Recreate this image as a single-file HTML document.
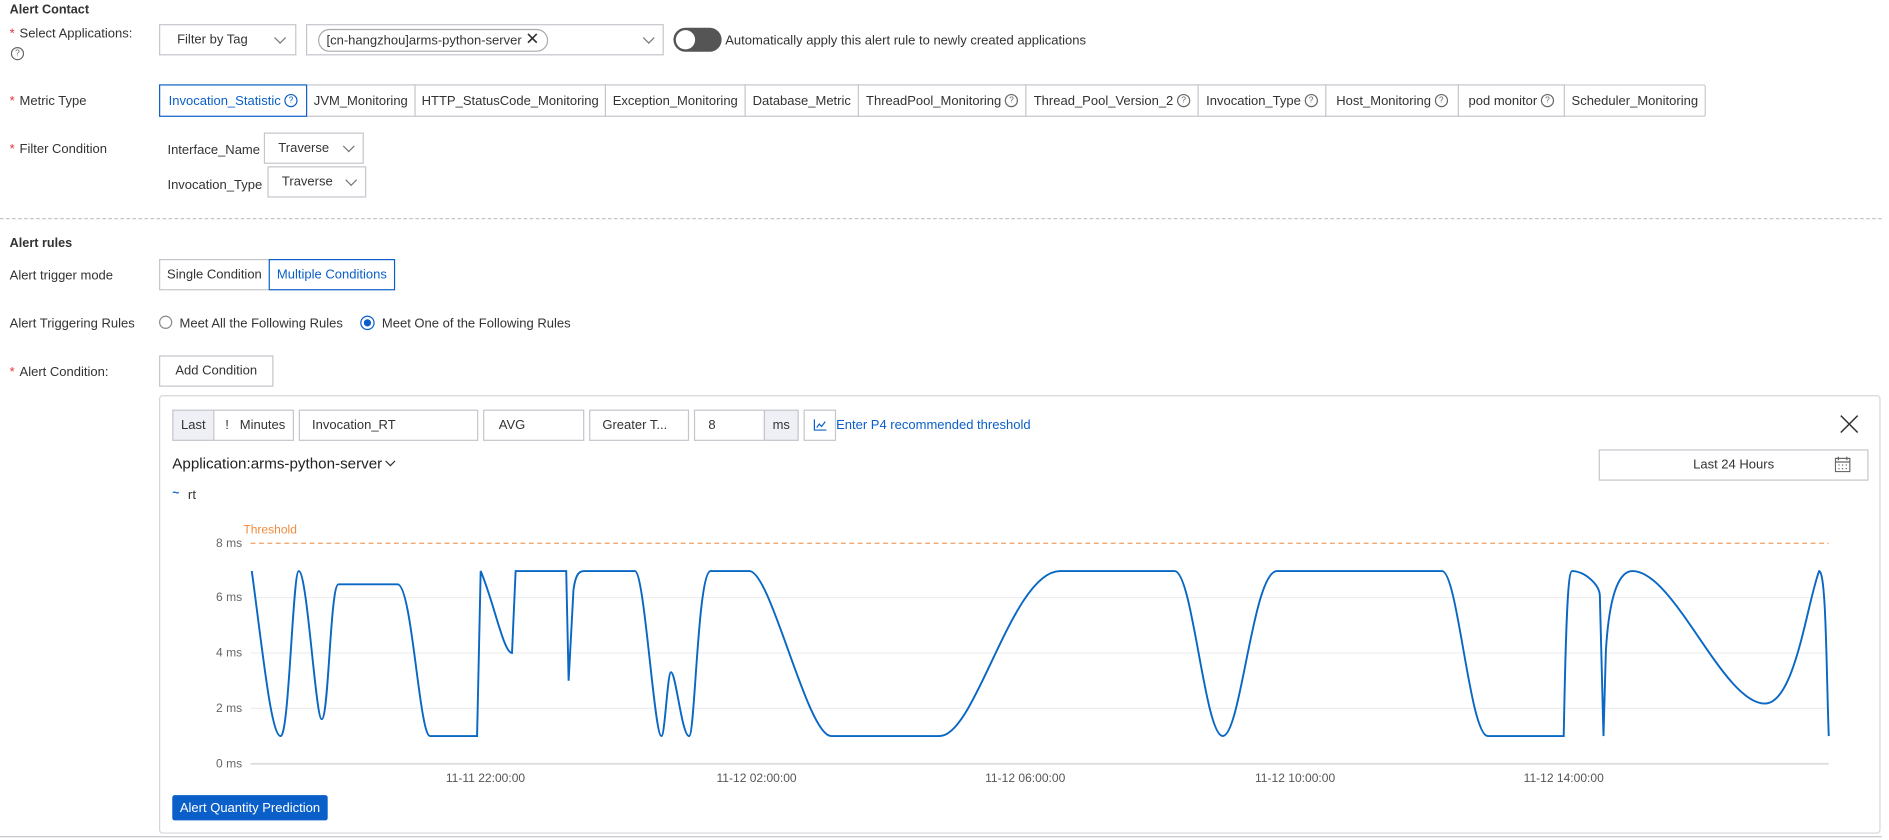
<!DOCTYPE html>
<html><head><meta charset="utf-8"><style>
html,body{margin:0;padding:0;background:#fff;overflow:hidden;width:1889px;height:839px}
#w{position:absolute;left:0;top:0;width:1568px;height:697px;transform:scale(1.20472);transform-origin:0 0;font-family:"Liberation Sans",sans-serif;font-size:10.8px;color:#333}
.a{position:absolute;white-space:nowrap}
.b{position:absolute;box-sizing:border-box;border:1px solid #c4c6cc;background:#fff;display:flex;align-items:center;white-space:nowrap;color:#333}
.r{color:#e5343a;margin-right:4px}
.q{display:inline-block;width:9px;height:9px;border:1px solid #666;border-radius:50%;font-size:7px;line-height:9px;text-align:center;color:#666;margin-left:3px;vertical-align:middle}
.chev{position:absolute;width:6px;height:6px;border-right:1px solid #777;border-bottom:1px solid #777;transform:rotate(45deg)}
.seg{position:absolute;top:70px;height:27px;box-sizing:border-box;border:1px solid #c4c6cc;border-left:none;display:flex;align-items:center;justify-content:center;color:#333}
.t{font-weight:bold;color:#333;font-size:10.5px}
.ax{position:absolute;font-size:10px;color:#666;text-align:right;width:40px}
.xl{position:absolute;font-size:10px;color:#555;top:641px;width:100px;text-align:center}
.l{margin-top:1px}
</style></head><body><div id="w">
<div class="a t" style="left:8px;top:2px">Alert Contact</div>
<div class="a" style="left:8px;top:22px"><span class="r">*</span>Select Applications:</div>
<div class="a" style="left:9px;top:38px"><span class="q" style="margin:0">?</span></div>
<div class="b" style="left:132px;top:20px;width:114px;height:26px;padding-left:14px">Filter by Tag<span class="chev" style="left:96px;top:7px"></span></div>
<div class="b" style="left:254px;top:20px;width:297px;height:26px;padding-left:9px"><span style="border:1px solid #aaa;border-radius:10px;padding:2px 6px;color:#333">[cn-hangzhou]arms-python-server <span style="font-size:14px;line-height:10px">✕</span></span><span class="chev" style="left:280px;top:7px"></span></div>
<div class="a" style="left:559px;top:23px;width:40px;height:20px;border-radius:10px;background:#555"></div>
<div class="a" style="left:561px;top:25px;width:16px;height:16px;border-radius:50%;background:#fff"></div>
<div class="a" style="left:602px;top:28px">Automatically apply this alert rule to newly created applications</div>

<div class="a" style="left:8px;top:78px"><span class="r">*</span>Metric Type</div>
<div class="seg" style="left:132px;width:123px;border:1px solid #0a5fc8;color:#0a5fc8">Invocation_Statistic<span class="q" style="border-color:#0a5fc8;color:#0a5fc8">?</span></div>
<div class="seg" style="left:255px;width:90px">JVM_Monitoring</div>
<div class="seg" style="left:345px;width:158px">HTTP_StatusCode_Monitoring</div>
<div class="seg" style="left:503px;width:116px">Exception_Monitoring</div>
<div class="seg" style="left:619px;width:94px">Database_Metric</div>
<div class="seg" style="left:713px;width:139px">ThreadPool_Monitoring<span class="q">?</span></div>
<div class="seg" style="left:852px;width:143px">Thread_Pool_Version_2<span class="q">?</span></div>
<div class="seg" style="left:995px;width:106px">Invocation_Type<span class="q">?</span></div>
<div class="seg" style="left:1101px;width:110px">Host_Monitoring<span class="q">?</span></div>
<div class="seg" style="left:1211px;width:88px">pod monitor<span class="q">?</span></div>
<div class="seg" style="left:1299px;width:117px;border-radius:0 2px 2px 0">Scheduler_Monitoring</div>

<div class="a" style="left:8px;top:118px"><span class="r">*</span>Filter Condition</div>
<div class="a" style="left:139px;top:119px">Interface_Name</div>
<div class="b" style="left:219px;top:110px;width:83px;height:26px;padding-left:11px">Traverse<span class="chev" style="left:66px;top:7px"></span></div>
<div class="a" style="left:139px;top:148px">Invocation_Type</div>
<div class="b" style="left:222px;top:138px;width:82px;height:26px;padding-left:11px">Traverse<span class="chev" style="left:65px;top:7px"></span></div>

<div class="a" style="left:0;top:181px;width:1562px;border-top:1px dashed #c4c6cc"></div>
<div class="a t" style="left:8px;top:196px">Alert rules</div>
<div class="a" style="left:8px;top:223px">Alert trigger mode</div>
<div class="b" style="left:132px;top:215px;width:92px;height:26px;justify-content:center">Single Condition</div>
<div class="b" style="left:223px;top:215px;width:105px;height:26px;justify-content:center;border-color:#0a5fc8;color:#0a5fc8">Multiple Conditions</div>
<div class="a" style="left:8px;top:263px">Alert Triggering Rules</div>
<div class="a" style="left:132px;top:262px;width:11px;height:11px;border:1px solid #888;border-radius:50%;box-sizing:border-box"></div>
<div class="a" style="left:149px;top:263px">Meet All the Following Rules</div>
<div class="a" style="left:299px;top:262px;width:12px;height:12px;border:1px solid #0a5fc8;border-radius:50%;box-sizing:border-box"></div>
<div class="a" style="left:302px;top:265px;width:6px;height:6px;background:#0a5fc8;border-radius:50%"></div>
<div class="a" style="left:317px;top:263px">Meet One of the Following Rules</div>
<div class="a" style="left:8px;top:303px"><span class="r">*</span>Alert Condition:</div>
<div class="b" style="left:132px;top:295px;width:95px;height:26px;justify-content:center">Add Condition</div>

<div class="a" style="left:132px;top:328px;width:1429px;height:364px;border:1px solid #d4d6da;border-radius:3px;box-sizing:border-box"></div>
<div class="b" style="left:143px;top:340px;width:35px;height:26px;justify-content:center;background:#eef0f5">Last</div>
<div class="b" style="left:177px;top:340px;width:67px;height:26px;padding-left:9px">!&nbsp;&nbsp;&nbsp;Minutes</div>
<div class="b" style="left:248px;top:340px;width:149px;height:26px;padding-left:10px">Invocation_RT</div>
<div class="b" style="left:401px;top:340px;width:84px;height:26px;padding-left:12px">AVG</div>
<div class="b" style="left:489px;top:340px;width:83px;height:26px;padding-left:10px">Greater T...</div>
<div class="b" style="left:576px;top:340px;width:59px;height:26px;padding-left:11px">8</div>
<div class="b" style="left:634px;top:340px;width:29px;height:26px;justify-content:center;background:#eef0f5">ms</div>
<div class="b" style="left:667px;top:340px;width:27px;height:26px;justify-content:center"><svg width="11" height="10"><path d="M1 0V9H11M3 7L5 4 7 6 10 2" fill="none" stroke="#0a5fc8" stroke-width="1"/></svg></div>
<div class="a" style="left:694px;top:347px;color:#0a5fc8">Enter P4 recommended threshold</div>
<svg class="a" style="left:1527px;top:344px" width="16" height="16"><path d="M1 1L15 15M15 1L1 15" stroke="#333" stroke-width="1.3"/></svg>
<div class="a" style="left:143px;top:378px;font-size:12.6px;color:#222">Application:arms-python-server <span style="display:inline-block;width:5px;height:5px;border-right:1px solid #333;border-bottom:1px solid #333;transform:rotate(45deg);position:relative;top:-3px"></span></div>
<div class="b" style="left:1327px;top:373px;width:224px;height:26px;justify-content:center">Last 24 Hours</div>
<svg class="a" style="left:1523px;top:379px" width="13" height="13"><rect x="0.5" y="1.5" width="12" height="11" fill="none" stroke="#666"/><path d="M0.5 4.5H12.5M3 0V3M10 0V3" stroke="#666"/><path d="M3 7h1M6 7h1M9 7h1M3 10h1M6 10h1M9 10h1" stroke="#666"/></svg>
<div class="a" style="left:143px;top:404px;color:#0a5fc8;font-size:10px;font-weight:bold">~</div>
<div class="a" style="left:156px;top:405px;font-size:11px">rt</div>

<div class="a" style="left:202px;top:435px;font-size:10px;color:#f08a3c">Threshold</div>
<div class="ax" style="left:161px;top:446px">8 ms</div>
<div class="ax" style="left:161px;top:491px">6 ms</div>
<div class="ax" style="left:161px;top:537px">4 ms</div>
<div class="ax" style="left:161px;top:583px">2 ms</div>
<div class="ax" style="left:161px;top:629px">0 ms</div>
<svg class="a" style="left:0;top:0" width="1568" height="697">
<path d="M208 496H1518M208 542H1518M208 588H1518" stroke="#eeeeee" stroke-width="1"/>
<path d="M208 634H1518" stroke="#ddd" stroke-width="1.5"/>
<path d="M208 451H1518" stroke="#f3a870" stroke-width="1.2" stroke-dasharray="4,3"/>
<path d="M209 474C218 540 225 611 233 611C240 611 243 474 248 474C255 474 262 597 267 597C273 597 274 485 281 485H330C342 485 348 611 357 611H396L399 474C410 500 418 542 425 542L428 474H470L472 565L476 490C478 474 482 474 486 474H527C535 474 543 611 549 611C552 611 554 558 557 558C561 558 566 611 572 611C577 611 579 474 590 474H622C640 474 670 611 690 611H780C810 611 840 474 880 474H975C990 474 1000 611 1015 611C1030 611 1040 474 1060 474H1197C1210 474 1220 611 1235 611H1298C1300 500 1302 474 1305 474C1315 474 1328 485 1328 495L1331 611L1333 540C1336 490 1345 474 1355 474C1390 474 1430 584 1465 584C1490 584 1500 500 1510 474C1516 474 1516 560 1518 611" fill="none" stroke="#0a68c4" stroke-width="1.6"/>
</svg>
<div class="xl" style="left:353px">11-11 22:00:00</div>
<div class="xl" style="left:578px">11-12 02:00:00</div>
<div class="xl" style="left:801px">11-12 06:00:00</div>
<div class="xl" style="left:1025px">11-12 10:00:00</div>
<div class="xl" style="left:1248px">11-12 14:00:00</div>
<div class="a" style="left:143px;top:660px;width:129px;height:21px;background:#0a5fc8;color:#fff;border-radius:2px;display:flex;align-items:center;justify-content:center">Alert Quantity Prediction</div>
<div class="a" style="left:0;top:694px;width:1562px;border-top:1px solid #c4c6cc"></div>
</div></body></html>
